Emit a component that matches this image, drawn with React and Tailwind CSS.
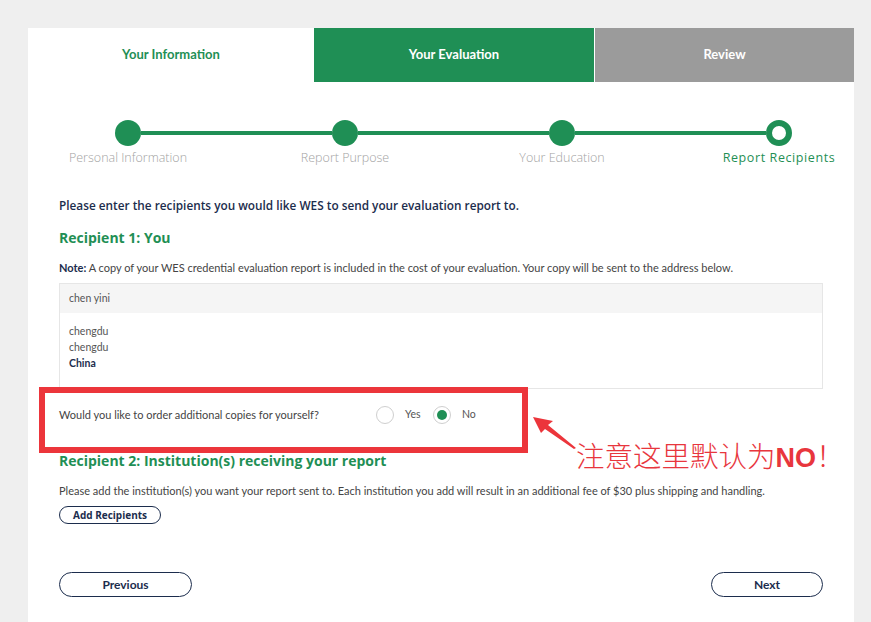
import React from "react";

const steps = ["Personal Information", "Report Purpose", "Your Education", "Report Recipients"];

function Step({ label, last }) {
  return (
    <div className="flex w-[26px] flex-col items-center">
      {last ? (
        <div className="h-[26px] w-[26px] rounded-full border-[6px] border-[#1f8f55] bg-white" />
      ) : (
        <div className="h-[26px] w-[26px] rounded-full bg-[#1f8f55]" />
      )}
      <div
        className={
          "mt-[5px] whitespace-nowrap leading-[14px] " +
          (last
            ? "text-[12.5px] font-medium tracking-[0.6px] text-[#1f8f55]"
            : "text-[12.5px] font-light text-[#a3a3a3]")
        }
      >
        {label}
      </div>
    </div>
  );
}

function Line() {
  return <div className="mt-[11px] h-[4px] w-[191px] bg-[#1f8f55]" />;
}

export default function App() {
  return (
    <div className="min-h-screen bg-[#efefef] pl-[28px] pt-[28px] font-['Lato',sans-serif]">
      <div className="relative h-[600px] w-[826px] bg-white">
        {/* Tabs */}
        <div className="flex h-[54px] text-[13px] font-bold">
          <div className="flex w-[286px] items-center justify-center text-[#1f8f55]">Your Information</div>
          <div className="flex w-[280px] items-center justify-center bg-[#1f8f55] text-white">Your Evaluation</div>
          <div className="ml-[1px] flex flex-1 items-center justify-center bg-[#9b9b9b] text-white">Review</div>
        </div>

        {/* Stepper */}
        <div className="ml-[87px] mt-[38px] flex items-start font-['Open_Sans',sans-serif]">
          <Step label={steps[0]} />
          <Line />
          <Step label={steps[1]} />
          <Line />
          <Step label={steps[2]} />
          <Line />
          <Step label={steps[3]} last />
        </div>

        {/* Content */}
        <div className="px-[31px]">
          <p className="mt-[32px] font-['Open_Sans',sans-serif] text-[11.8px] font-semibold leading-[16px] text-[#1c2d4d]">
            Please enter the recipients you would like WES to send your evaluation report to.
          </p>
          <h2 className="mt-[15px] font-['Open_Sans',sans-serif] text-[14px] font-bold leading-[20px] text-[#1f8f55]">
            Recipient 1: You
          </h2>
          <p className="mt-[13px] text-[11px] leading-[14px] text-[#444]">
            <span className="font-bold text-[#1c2d4d]">Note:</span> A copy of your WES credential evaluation report is
            included in the cost of your evaluation. Your copy will be sent to the address below.
          </p>

          <div className="mt-[8px] border border-[#e6e6e6] text-[10.5px] text-[#555]">
            <div className="flex h-[29px] items-center bg-[#f5f5f5] px-[9px]">chen yini</div>
            <div className="px-[9px] pb-[17px] pt-[10px] leading-[16px]">
              <div>chengdu</div>
              <div>chengdu</div>
              <div className="font-bold text-[#1c2d4d]">China</div>
            </div>
          </div>

          <div className="mt-[17px] flex h-[18px] items-center text-[11px] text-[#444]">
            <span className="w-[317px]">Would you like to order additional copies for yourself?</span>
            <span className="h-[18px] w-[18px] rounded-full border border-[#cfcfcf] bg-white" />
            <span className="ml-[11px] w-[28px] text-[10.5px] text-[#555]">Yes</span>
            <span className="flex h-[18px] w-[18px] items-center justify-center rounded-full border border-[#cfcfcf] bg-white">
              <span className="h-[10px] w-[10px] rounded-full bg-[#1f8f55]" />
            </span>
            <span className="ml-[11px] text-[10.5px] text-[#555]">No</span>
          </div>

          <h2 className="mt-[27px] font-['Open_Sans',sans-serif] text-[14px] font-bold leading-[20px] text-[#1f8f55]">
            Recipient 2: Institution(s) receiving your report
          </h2>
          <p className="mt-[13px] text-[11px] leading-[14px] text-[#444]">
            Please add the institution(s) you want your report sent to. Each institution you add will result in an
            additional fee of $30 plus shipping and handling.
          </p>
          <button className="mt-[8px] flex h-[18px] w-[102px] items-center justify-center rounded-full border-[1.5px] border-[#1c2d4d] font-['Open_Sans',sans-serif] text-[10px] font-bold text-[#1c2d4d]">
            Add Recipients
          </button>

          <div className="mt-[48px] flex justify-between">
            <button className="flex h-[25px] w-[133px] items-center justify-center rounded-full border-[1.5px] border-[#1c2d4d] text-[12px] font-bold text-[#1c2d4d]">
              Previous
            </button>
            <button className="flex h-[25px] w-[112px] items-center justify-center rounded-full border-[1.5px] border-[#1c2d4d] text-[12px] font-bold text-[#1c2d4d]">
              Next
            </button>
          </div>
        </div>

        {/* Annotation overlay */}
        <div className="absolute left-[11px] top-[359px] h-[66px] w-[489px] border-[6px] border-[#ec353b]" />
        <svg className="absolute left-[500px] top-[384px]" width="60" height="40" viewBox="0 0 60 40">
          <polygon points="5,5 25,9 20,13 48,36 46,37 17,17 13,21" fill="#ec353b" />
        </svg>
        <div className="absolute left-[548px] top-[410px] whitespace-nowrap font-['Noto_Sans_CJK_SC',sans-serif] text-[28.5px] font-light leading-[34px] text-[#e8363d]">
          注意这里默认为<span className="font-['Liberation_Sans',sans-serif] text-[27px] font-bold">NO</span>！
        </div>
      </div>
    </div>
  );
}
